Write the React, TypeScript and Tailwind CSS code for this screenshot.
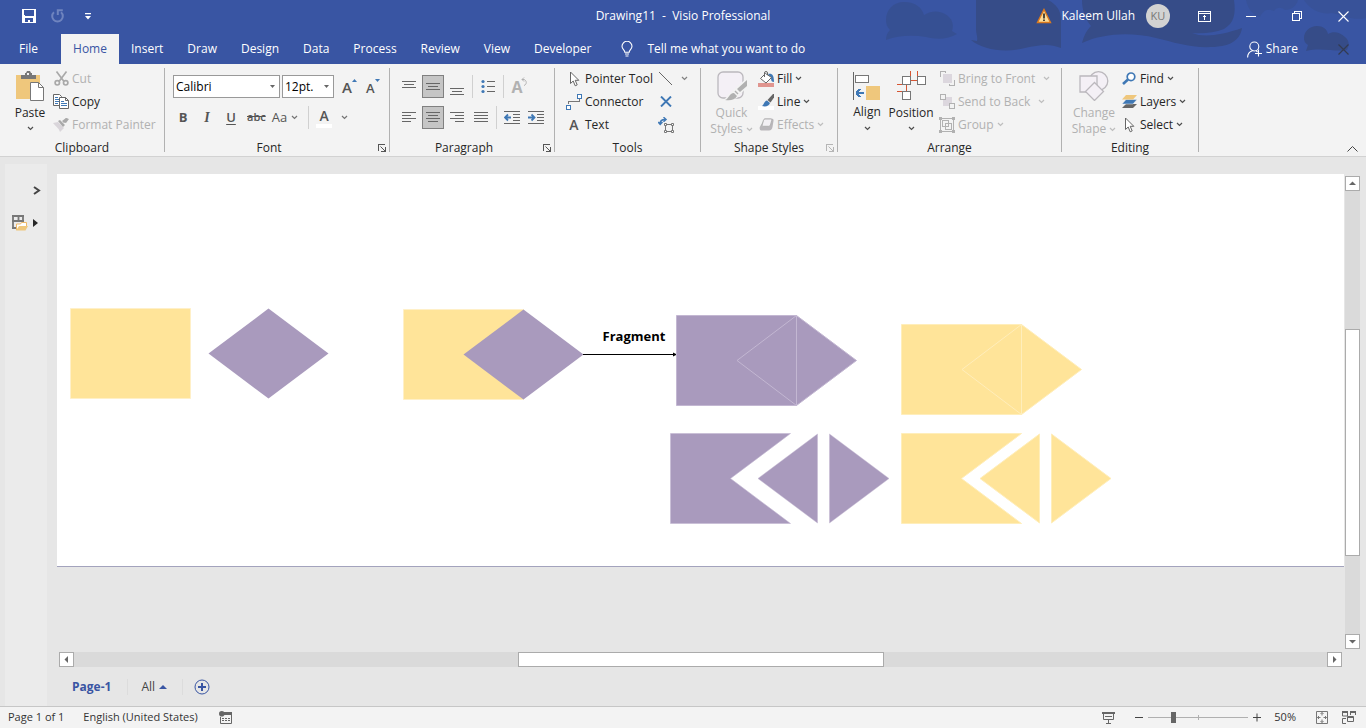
import type { ReactNode } from 'react';

interface ChildrenProps {
  children: ReactNode;
}

const tabs = ['Insert', 'Draw', 'Design', 'Data', 'Process', 'Review', 'View', 'Developer'];

const PURPLE = '#a99abd';
const YELLOW = '#ffe499';

/* ---------- small shared pieces ---------- */

function Chevron() {
  return (
    <svg width="7" height="5" viewBox="0 0 7 5" fill="none" className="shrink-0 opacity-80">
      <path d="M1 1l2.5 2.5L6 1" stroke="currentColor" strokeWidth="1.2" />
    </svg>
  );
}

function Separator() {
  return <div className="my-1 w-px shrink-0 bg-[#b1b1b1]" />;
}

function MiniSeparator() {
  return (
    <div className="flex h-[23px] w-[7px] justify-center">
      <div className="h-full w-px bg-[#d0d0d0]" />
    </div>
  );
}

function Launcher({ label, muted }: { label: string; muted?: boolean }) {
  return (
    <button
      aria-label={label}
      className={`absolute right-[3px] bottom-1 ${muted ? 'text-[#b5b5b5]' : 'text-[#555]'}`}
    >
      <svg width="8" height="8" viewBox="0 0 8 8" fill="none" stroke="currentColor">
        <path d="M.5 7V.5H7" shapeRendering="crispEdges" />
        <path d="M7.5 3v4.5H3" shapeRendering="crispEdges" />
        <path d="M2.5 2.500L7 7" />
      </svg>
    </button>
  );
}

interface GroupProps {
  label: string;
  className: string;
  launcher?: boolean;
  mutedLauncher?: boolean;
  children: ReactNode;
}

function Group({ label, className, launcher, mutedLauncher, children }: GroupProps) {
  return (
    <>
      <section
        aria-label={label}
        className={`relative flex shrink-0 flex-col justify-between pt-[3px] ${className}`}
      >
        <div className="flex h-[69px]">{children}</div>
        <h2 className="text-center leading-4">{label}</h2>
        {launcher && <Launcher label={`${label} settings`} muted={mutedLauncher} />}
      </section>
      <Separator />
    </>
  );
}

interface RowButtonProps {
  icon: ReactNode;
  label: string;
  arrow?: boolean;
  wideArrow?: boolean;
  disabled?: boolean;
}

function RowButton({ icon, label, arrow, wideArrow, disabled }: RowButtonProps) {
  return (
    <button
      disabled={disabled}
      className={`flex h-[23px] items-center whitespace-nowrap ${disabled ? 'text-[#b1b1b1]' : ''}`}
    >
      <span className="mr-[3px] flex w-4 justify-center">{icon}</span>
      {label}
      {arrow && (
        <span className={wideArrow ? 'ml-2' : 'ml-[3px]'}>
          <Chevron />
        </span>
      )}
    </button>
  );
}

interface BigButtonProps {
  icon: ReactNode;
  lines: string[];
  className: string;
  disabled?: boolean;
}

function BigButton({ icon, lines, className, disabled }: BigButtonProps) {
  return (
    <button
      disabled={disabled}
      className={`flex flex-col items-center pt-1 leading-4 ${disabled ? 'text-[#b1b1b1]' : ''} ${className}`}
    >
      <span className="mb-1 flex h-[30px] items-center">{icon}</span>
      <span>{lines[0]}</span>
      <span className="flex h-4 items-center gap-[3px] whitespace-nowrap">
        {lines[1]}
        <Chevron />
      </span>
    </button>
  );
}

function ToolButton({ label, active, children }: ChildrenProps & { label: string; active?: boolean }) {
  return (
    <button
      aria-label={label}
      className={`mx-px flex h-[23px] w-[22px] items-center justify-center ${
        active ? 'border border-[#808080] bg-[#c5c5c5]' : ''
      }`}
    >
      {children}
    </button>
  );
}

/* Text-lines icon, each row is [x, width, y] */
function Lines({ rows }: { rows: [number, number, number][] }) {
  return (
    <svg width="16" height="18" viewBox="0 0 16 18" shapeRendering="crispEdges">
      {rows.map(([x, w, y]) => (
        <rect key={y} x={x} y={y} width={w} height="1" fill="#666" />
      ))}
    </svg>
  );
}

/* ---------- title bar ---------- */

function HeaderArt() {
  return (
    <svg className="absolute top-0 right-0" width="500" height="64" viewBox="866 0 500 64" aria-hidden="true">
      <g fill="#364c88">
        <path d="M886 20c0-10 7-18 18-18 12 0 18 6 20 13 8-5 16-4 21-1 8 4 9 12 7 17l5 3c-8 5-20 6-31 3-13-2-27-2-40 3 0-4 1-7 4-10-3-3-4-6-4-10z" opacity=".6" />
        <path d="M976 0h72c8 4 13 10 13 20v28c-12-5-22-3-36 0-20 5-42 2-54-8l6 1c1-4-1-7-1-12z" />
        <path d="M1082 0h152c2 14 0 23-10 29-10 4-22 5-32 4 12 5 30 2 50-5-1 8-7 16-20 18-26 4-45-3-66-8-25-6-52-5-74 5 2-8 5-13 9-17-6-7-9-16-9-26z" />
        <path d="M1304 38c0-7 6-12 13-12 6 0 10 3 11 8 5-3 12-2 17 3 5 4 4 9 2 13-11 2-27-3-41 1l2-6c-3-2-4-4-4-7z" />
        <path d="M1246 0h52c-2 7-8 10-13 10-4-3-8-3-11 1-7-3-11 0-14 6-7-2-12-8-14-17zM1304 0h62v18c-12 3-24-3-34-5-10 2-22-3-28-13z" opacity=".35" />
      </g>
    </svg>
  );
}

function TitleBar() {
  return (
    <div className="relative grid h-8 grid-cols-3 items-center">
      <div className="flex items-center pl-[22px]">
        <button aria-label="Save" className="mr-[14px]">
          <svg width="14" height="14" viewBox="0 0 14 14" shapeRendering="crispEdges">
            <path fill="#fff" fillRule="evenodd" d="M0 0h14v14H0zM2 1v5l1 1h8l1-1V1zM3 9v4h3v-2h2v2h3V9z" />
          </svg>
        </button>
        <button aria-label="Redo" className="mr-5">
          <svg width="15" height="15" viewBox="0 0 15 15" fill="none" stroke="#6f84bf" strokeWidth="2">
            <path d="M4 3.2A5.3 5.3 0 1 0 11 3.2" />
            <path d="M7.8 6V1.2h5" />
          </svg>
        </button>
        <button aria-label="Customize Quick Access Toolbar">
          <svg width="6" height="7" viewBox="0 0 6 7" fill="#fff">
            <path d="M0 0h6v1.2H0zM0 3h6L3 6.4z" />
          </svg>
        </button>
      </div>
      <h1 className="text-center whitespace-pre">Drawing11  -  Visio Professional</h1>
      <div className="flex items-center justify-end pr-[17px]">
        <svg width="16" height="16" viewBox="0 0 16 16" className="mr-[9px] shrink-0">
          <path d="M8 1.5L14.5 14.5H1.5z" fill="#fbdc9a" stroke="#dc7a1c" strokeWidth="1.4" />
          <path d="M7.2 5.5h1.6v5H7.2zM7.2 11.5h1.6V13H7.2z" fill="#222" />
        </svg>
        <button className="flex items-center gap-[11px] whitespace-nowrap">
          Kaleem Ullah
          <span className="flex size-6 items-center justify-center rounded-full bg-[#d2d2d2] text-[11px] text-[#777]">
            KU
          </span>
        </button>
        <button aria-label="Ribbon Display Options" className="ml-7">
          <svg width="13" height="11" viewBox="0 0 13 11" fill="none" stroke="#fff" shapeRendering="crispEdges">
            <path d="M.5 .5h12v10H.5zM.5 2.5h12" />
            <path d="M6.5 9V4.5M4.5 6.5l2-2 2 2" />
          </svg>
        </button>
        <button aria-label="Minimize" className="ml-[35px]">
          <svg width="10" height="10" viewBox="0 0 10 10">
            <path d="M0 5h10v1H0z" fill="#fff" />
          </svg>
        </button>
        <button aria-label="Restore Down" className="ml-9">
          <svg width="10" height="10" viewBox="0 0 10 10" fill="none" stroke="#fff" shapeRendering="crispEdges">
            <path d="M.5 2.5h7v7h-7zM2.5 2V.5h7v7H8" />
          </svg>
        </button>
        <button aria-label="Close" className="ml-9">
          <svg width="11" height="11" viewBox="0 0 11 11" stroke="#fff" strokeWidth="1.1">
            <path d="M.5 .5l10 10M10.5 .5l-10 10" />
          </svg>
        </button>
      </div>
    </div>
  );
}

function TabBar() {
  return (
    <nav className="relative flex flex-1 items-end pt-0.5">
      <button className="h-[30px] w-[61px] pr-1">File</button>
      <button className="h-[30px] w-[58px] bg-[#f3f3f3] text-[#3955a3]">Home</button>
      {tabs.map((tab) => (
        <button key={tab} className="h-[30px] px-3 first-of-type:ml-0">
          {tab}
        </button>
      ))}
      <button className="flex h-[30px] items-center pl-[18px] whitespace-nowrap">
        <svg width="12" height="16" viewBox="0 0 12 16" fill="none" stroke="#fff" strokeWidth="1.1" className="mr-[14px]">
          <path d="M3.8 11.2C3.8 8.8 1 8.2 1 5.3a5 5 0 0 1 10 0c0 2.900-2.800 3.500-2.800 5.900zM4 13h4M4.500 15h3" />
        </svg>
        Tell me what you want to do
      </button>
      <button className="ml-auto flex h-[30px] items-center gap-1">
        <svg width="15" height="17" viewBox="0 0 15 17" fill="none" stroke="#fff" strokeWidth="1.1">
          <circle cx="7.300" cy="5.500" r="4.500" />
          <path d="M.6 16.500c0-3.500 2-6 5-6.800M9 9.500l1.500 1.500M11.500 8.500v7M8 12.500h7" />
        </svg>
        Share
      </button>
      <button aria-label="Close document" className="mr-[17px] ml-10 flex h-[30px] items-center">
        <svg width="11" height="11" viewBox="0 0 11 11" stroke="#333b52" strokeWidth="1.2">
          <path d="M.5 .5l10 10M10.500 .5l-10 10" />
        </svg>
      </button>
    </nav>
  );
}

/* ---------- ribbon ---------- */

const pasteIcon = (
  <svg width="28" height="30" viewBox="0 0 28 30">
    <path d="M0 4h24v24H0z" fill="#efc77c" />
    <path d="M5 4h4V2h1l1-2h3l1 2h1v2h4v4H5z" fill="#777" />
    <path d="M11 2h2v2h-2z" fill="#f3f3f3" />
    <path d="M14.500 11.500h8l5 5v13h-13z" fill="#fff" stroke="#777" />
    <path d="M22.500 11.500v5h5" fill="none" stroke="#777" />
  </svg>
);

const cutIcon = (
  <svg width="15" height="15" viewBox="0 0 15 15" fill="none" stroke="#a9a9a9" strokeWidth="1.700">
    <path d="M2.500 .5l7.500 10M12.500 .5L5 10.500" />
    <circle cx="3.300" cy="11.800" r="2.200" />
    <circle cx="11.700" cy="11.800" r="2.200" />
  </svg>
);

const copyIcon = (
  <svg width="16" height="15" viewBox="0 0 16 15">
    <path d="M.5 .5h6l2 2v9h-8z" fill="#fff" stroke="#666" />
    <path d="M2 3.500h3M2 5.500h4M2 7.500h4M2 9.500h3" stroke="#3f78b5" />
    <path d="M6.500 3.500h6l3 3v8h-9z" fill="#fff" stroke="#666" />
    <path d="M12.500 3.500v3h3" fill="none" stroke="#666" />
    <path d="M8 7.500h3M8 9.500h6M8 11.500h6" stroke="#3f78b5" />
  </svg>
);

const painterIcon = (
  <svg width="16" height="14" viewBox="0 0 16 14">
    <path d="M0 5l5-1 6 6-4 4C6 10 3 9 0 5z" fill="#d9d5da" />
    <path d="M5 3l2-1 5 5-2 2zM9 3l4-3 2 1-4 4z" fill="#a9a9a9" />
    <path d="M13 0l3 1-3 4-3-1z" fill="#a9a9a9" />
  </svg>
);

const pointerIcon = (
  <svg width="11" height="16" viewBox="0 0 11 16">
    <path d="M1.500 1v11.500l2.700-2.500 2 4.800 2-.9-2-4.600h3.600z" fill="#fff" stroke="#666" />
  </svg>
);

const connectorIcon = (
  <svg width="16" height="16" viewBox="0 0 16 16" fill="none" shapeRendering="crispEdges">
    <path d="M2.500 10V7.500h11V5" stroke="#777" />
    <path d="M11.500 .5h4v4h-4zM.5 11.500h4v4h-4z" fill="#fff" stroke="#3f78b5" />
  </svg>
);

const fillIcon = (
  <svg width="16" height="16" viewBox="0 0 16 16">
    <path d="M0 12h16v4H0z" fill="#e0958f" />
    <path d="M10 3c4-1 6 1 6 8-2 0-3-1-3-4z" fill="#3f78b5" />
    <path d="M2.500 7.500l5-5 6 4-5.500 5.500z" fill="#fff" stroke="#666" />
    <path d="M6.500 6V2a1.500 1.500 0 0 1 3 0v2" fill="none" stroke="#666" />
  </svg>
);

const lineIcon = (
  <svg width="16" height="16" viewBox="0 0 16 16">
    <path d="M0 12h16v4H0z" fill="#fff" />
    <path d="M4 12c2-1 2-5 5-5.500L12 9c-1 3-4 4-8 3z" fill="#3f78b5" />
    <path d="M9.500 6L15 0h1v3.500L12.500 8.500z" fill="#666" />
  </svg>
);

const effectsIcon = (
  <svg width="15" height="13" viewBox="0 0 15 13">
    <path d="M5.500 .5h7c1.500 0 2.300 1 2 2.500l-1 6c-.4 2-1.500 3.500-3.500 3.500H3C1 12.500 .3 11 .8 9z" fill="#b9b6ba" />
    <path d="M6 1h5.500c1 0 1.400.7 1.200 1.500L11.500 7c-.3.900-.8 1.300-1.700 1.300H4.300c-1 0-1.400-.6-1.100-1.400L4.500 2.200C4.800 1.400 5.200 1 6 1z" fill="#f3f0f4" stroke="#b1b1b1" />
  </svg>
);

const quickIcon = (
  <svg width="30" height="30" viewBox="0 0 30 30">
    <rect x="1" y="1" width="25" height="26" rx="5" fill="#f4f0f6" stroke="#bbb8bd" strokeWidth="1.300" />
    <path d="M30 7v9L20 27l-8 3H6l8-9z" fill="#f3f3f3" />
    <path d="M30 9v6l-7 6-3-3zM18.500 19.500l3 3-1 1-3-3zM8 29c4-1 4-7 9-7l3 3c-2 4-7 5-12 4z" fill="#b1b1b1" />
  </svg>
);

const alignIcon = (
  <svg width="28" height="29" viewBox="0 0 28 29" shapeRendering="crispEdges">
    <path d="M0 1h1v28H0z" fill="#666" />
    <path d="M2.500 4.500h13v7h-13z" fill="#fff" stroke="#777" />
    <path d="M13 15h14v14H13z" fill="#efc77c" />
    <path d="M10.500 22H4M7 18l-3.500 4L7 26" fill="none" stroke="#3f78b5" strokeWidth="2" />
  </svg>
);

const positionIcon = (
  <svg width="29" height="30" viewBox="0 0 29 30" fill="none" shapeRendering="crispEdges">
    <path d="M13.500 0v5M20.500 0v5M14 9.500h6M0 13.500h5M0 20.500h5M9.500 14v6" stroke="#d65532" />
    <path d="M5.500 5.500h8v8h-8zM20.500 5.500h8v8h-8zM5.500 20.500h8v8h-8z" fill="#fff" stroke="#777" />
  </svg>
);

const frontIcon = (
  <svg width="15" height="15" viewBox="0 0 15 15" fill="none" stroke="#b1b1b1" shapeRendering="crispEdges">
    <path d="M3 3h9v9H3z" fill="#dcd7de" stroke="none" />
    <path d="M.5 6V.5h5V2M14.500 9v5.500h-5V13" />
  </svg>
);

const backIcon = (
  <svg width="15" height="15" viewBox="0 0 15 15" shapeRendering="crispEdges">
    <path d="M3 3h9v9H3z" fill="#dcd7de" />
    <path d="M.5 .5h5v5h-5zM9.500 9.500h5v5h-5z" fill="#f3f3f3" stroke="#b1b1b1" />
  </svg>
);

const groupIcon = (
  <svg width="16" height="16" viewBox="0 0 16 16" fill="none" stroke="#b1b1b1" shapeRendering="crispEdges">
    <path d="M3.500 3.500h6v6h-6zM6.500 6.500h6v6h-6zM3 1.500h10M3 14.500h10M1.500 3v10M14.500 3v10" strokeWidth="1" />
    <path d="M0 0h3v3H0zM13 0h3v3h-3zM0 13h3v3H0zM13 13h3v3h-3z" fill="#b1b1b1" stroke="none" />
  </svg>
);

const changeShapeIcon = (
  <svg width="30" height="30" viewBox="0 0 30 30" fill="#f4f0f6" stroke="#bbb8bd" strokeWidth="1.300">
    <circle cx="19.500" cy="10" r="9.300" />
    <path d="M1 5h17v16H1z" />
    <path d="M15.500 11.500l9 9-9 9-9-9z" />
  </svg>
);

const findIcon = (
  <svg width="14" height="13" viewBox="0 0 14 13" fill="none" stroke="#3f78b5">
    <circle cx="9" cy="4.800" r="3.800" strokeWidth="1.700" fill="#fff" />
    <path d="M6 7.500L1 12" strokeWidth="2.600" />
  </svg>
);

const layersIcon = (
  <svg width="15" height="13" viewBox="0 0 15 13">
    <path d="M4 9h11l-4 4H0z" fill="#666" />
    <path d="M4 4.500h11l-4 4.500H0z" fill="#3f78b5" stroke="#f3f3f3" strokeWidth=".5" />
    <path d="M4 0h11l-4 4.500H0z" fill="#efc77c" />
  </svg>
);

function BulletsIcon() {
  return (
    <svg width="15" height="15" viewBox="0 0 15 15">
      <path d="M6 2h8v1H6zM6 7h8v1H6zM6 12h8v1H6z" fill="#666" />
      <circle cx="2" cy="2.500" r="1.600" fill="#3f78b5" />
      <circle cx="2" cy="7.500" r="1.600" fill="#3f78b5" />
      <circle cx="2" cy="12.500" r="1.600" fill="#3f78b5" />
    </svg>
  );
}

function IndentIcon({ right }: { right?: boolean }) {
  return (
    <svg width="16" height="13" viewBox="0 0 16 13" className="shrink-0">
      <path d="M0 0h16v1H0zM9 3h7v1H9zM9 6h7v1H9zM9 9h7v1H9zM0 12h16v1H0z" fill="#666" />
      <path
        d={right ? 'M0 6.500h6M3.500 3.500l3 3-3 3' : 'M7 6.500H1M4 3.500l-3 3 3 3'}
        fill="none"
        stroke="#3f78b5"
        strokeWidth="1.800"
      />
    </svg>
  );
}

interface PickerProps {
  label: string;
  value: string;
  className: string;
}

function Picker({ label, value, className }: PickerProps) {
  return (
    <div className={`relative h-[23px] ${className}`}>
      <select
        aria-label={label}
        defaultValue={value}
        className="size-full appearance-none border border-[#999] bg-white pl-[2px] text-black"
      >
        <option>{value}</option>
      </select>
      <svg width="5" height="3" viewBox="0 0 5 3" className="pointer-events-none absolute top-[10px] right-[5px]">
        <path d="M0 0h5L2.500 3z" fill="#666" />
      </svg>
    </div>
  );
}

function FontGroup() {
  return (
    <Group label="Font" className="w-[224px] pr-4" launcher>
      <div className="flex flex-col gap-2 pt-2 pl-2 font-semibold text-[#555]">
        <div className="flex font-normal">
          <Picker label="Font" value="Calibri" className="w-[107px]" />
          <Picker label="Font size" value="12pt." className="ml-[2px] w-[52px]" />
          <button aria-label="Increase font size" className="ml-2 flex w-4 font-semibold">
            <span className="pt-1 text-[15px] leading-4">A</span>
            <svg width="5" height="3" viewBox="0 0 5 3" className="mt-1 shrink-0">
              <path d="M0 3h5L2.500 0z" fill="#3f78b5" />
            </svg>
          </button>
          <button aria-label="Decrease font size" className="ml-2 flex w-4 font-semibold">
            <span className="pt-[5px] text-[13px] leading-4">A</span>
            <svg width="5" height="3" viewBox="0 0 5 3" className="mt-1 shrink-0">
              <path d="M0 0h5L2.500 3z" fill="#3f78b5" />
            </svg>
          </button>
        </div>
        <div className="-ml-0.5 flex text-[13px]">
          <ToolButton label="Bold">
            <span className="font-bold">B</span>
          </ToolButton>
          <ToolButton label="Italic">
            <span className="font-['Liberation_Serif'] text-sm font-bold italic">I</span>
          </ToolButton>
          <ToolButton label="Underline">
            <span className="underline underline-offset-2">U</span>
          </ToolButton>
          <button className="ml-1 text-[11px] line-through">abc</button>
          <button className="ml-1.5 flex items-center gap-1 font-medium" aria-label="Change case">
            Aa <Chevron />
          </button>
          <div className="ml-[7px]">
            <MiniSeparator />
          </div>
          <button className="ml-1 flex items-center gap-[9px]" aria-label="Font color">
            <span className="flex w-4 flex-col items-center border-b-4 border-white text-sm leading-4">A</span>
            <Chevron />
          </button>
        </div>
      </div>
    </Group>
  );
}

function ParagraphGroup() {
  return (
    <Group label="Paragraph" className="w-[164px] pr-4" launcher>
      <div className="flex flex-col gap-2 pt-2 pl-[7px]">
        <div className="flex">
          <ToolButton label="Align top">
            <Lines rows={[[1, 14, 3], [3, 10, 6], [1, 14, 9]]} />
          </ToolButton>
          <ToolButton label="Align middle" active>
            <Lines rows={[[1, 14, 5], [3, 10, 8], [1, 14, 11]]} />
          </ToolButton>
          <ToolButton label="Align bottom">
            <Lines rows={[[1, 14, 10], [3, 10, 13], [1, 14, 16]]} />
          </ToolButton>
          <MiniSeparator />
          <ToolButton label="Bullets">
            <BulletsIcon />
          </ToolButton>
          <MiniSeparator />
          <ToolButton label="Rotate text">
            <span className="text-base font-bold text-[#b1b1b1]">A</span>
            <svg width="6" height="9" viewBox="0 0 6 9" fill="none" stroke="#b1b1b1" className="mt-0.5 -ml-0.5 shrink-0 self-start">
              <path d="M3 8.500c3-1 3-5 0-6H1M3 .5l-2 2 2 2" />
            </svg>
          </ToolButton>
        </div>
        <div className="flex">
          <ToolButton label="Align left">
            <Lines rows={[[1, 14, 3], [1, 9, 6], [1, 14, 9], [1, 9, 12]]} />
          </ToolButton>
          <ToolButton label="Center" active>
            <Lines rows={[[1, 14, 3], [3, 10, 6], [1, 14, 9], [3, 10, 12]]} />
          </ToolButton>
          <ToolButton label="Align right">
            <Lines rows={[[1, 14, 3], [6, 9, 6], [1, 14, 9], [6, 9, 12]]} />
          </ToolButton>
          <ToolButton label="Justify">
            <Lines rows={[[1, 14, 3], [1, 14, 6], [1, 14, 9], [1, 14, 12]]} />
          </ToolButton>
          <MiniSeparator />
          <ToolButton label="Decrease indent">
            <IndentIcon />
          </ToolButton>
          <ToolButton label="Increase indent">
            <IndentIcon right />
          </ToolButton>
        </div>
      </div>
    </Group>
  );
}

function Ribbon() {
  return (
    <div className="flex h-[93px] shrink-0 border-b border-[#d2d2d2] bg-[#f3f3f3] text-[#262626]">
      <Group label="Clipboard" className="w-[164px]">
        <BigButton icon={pasteIcon} lines={['Paste']} className="ml-2 w-11" />
        <div className="ml-px flex flex-col">
          <RowButton icon={cutIcon} label="Cut" disabled />
          <RowButton icon={copyIcon} label="Copy" />
          <RowButton icon={painterIcon} label="Format Painter" disabled />
        </div>
      </Group>

      <FontGroup />
      <ParagraphGroup />

      <Group label="Tools" className="w-[145px]">
        <div className="ml-[11px] flex w-[92px] flex-col">
          <RowButton icon={pointerIcon} label="Pointer Tool" />
          <RowButton icon={connectorIcon} label="Connector" />
          <RowButton icon={<span className="text-sm font-semibold text-[#555]">A</span>} label="Text" />
        </div>
        <div className="flex flex-col text-[#666]">
          <button aria-label="Line" className="flex h-[23px] items-center gap-2">
            <svg width="15" height="15" viewBox="0 0 15 15" stroke="currentColor">
              <path d="M1 1l13 13" />
            </svg>
            <Chevron />
          </button>
          <button aria-label="Connection point" className="flex h-[23px] items-center pl-0.5">
            <svg width="12" height="11" viewBox="0 0 12 11" stroke="#3f78b5" strokeWidth="1.900">
              <path d="M1 .5l10 10M11 .5l-10 10" />
            </svg>
          </button>
          <button aria-label="Text block" className="flex h-[23px] items-center">
            <svg width="17" height="16" viewBox="0 0 17 16" fill="none">
              <path d="M2 7c0-3 1-4.500 5-4.500M.2 5l2 2.300L4.500 5M5.500 .2L8 2.500 5.500 4.800" stroke="#3f78b5" strokeWidth="1.500" />
              <path d="M7.500 7.500h7v7h-7z" stroke="#777" />
              <path d="M6.500 6.500h2v2h-2zM13.500 6.500h2v2h-2zM6.500 13.500h2v2h-2zM13.500 13.500h2v2h-2z" fill="#fff" stroke="#777" />
            </svg>
          </button>
        </div>
      </Group>

      <Group label="Shape Styles" className="w-[136px]" launcher mutedLauncher>
        <BigButton icon={quickIcon} lines={['Quick', 'Styles']} className="ml-1 w-[53px]" disabled />
        <div className="flex flex-col">
          <RowButton icon={fillIcon} label="Fill" arrow />
          <RowButton icon={lineIcon} label="Line" arrow />
          <RowButton icon={effectsIcon} label="Effects" arrow disabled />
        </div>
      </Group>

      <Group label="Arrange" className="w-[223px]">
        <BigButton icon={alignIcon} lines={['Align']} className="ml-[7px] w-11" />
        <BigButton icon={positionIcon} lines={['Position']} className="mr-1.5 w-11" />
        <div className="flex flex-col">
          <RowButton icon={frontIcon} label="Bring to Front" arrow wideArrow disabled />
          <RowButton icon={backIcon} label="Send to Back" arrow wideArrow disabled />
          <RowButton icon={groupIcon} label="Group" arrow disabled />
        </div>
      </Group>

      <Group label="Editing" className="w-[136px]">
        <BigButton icon={changeShapeIcon} lines={['Change', 'Shape']} className="ml-[5px] w-[54px]" disabled />
        <div className="flex flex-col">
          <RowButton icon={findIcon} label="Find" arrow />
          <RowButton icon={layersIcon} label="Layers" arrow />
          <RowButton icon={pointerIcon} label="Select" arrow />
        </div>
      </Group>

      <button aria-label="Collapse the Ribbon" className="mt-auto mr-2 mb-1 ml-auto">
        <svg width="11" height="6" viewBox="0 0 11 6" fill="none" stroke="#444">
          <path d="M.5 5.500l5-5 5 5" />
        </svg>
      </button>
    </div>
  );
}

/* ---------- drawing page ---------- */

function Drawing() {
  return (
    <svg width="1287" height="392" viewBox="0 0 1287 392" className="block max-w-none">
      <g strokeWidth="1">
        <path d="M13.500 134.500h120v90h-120z" fill={YELLOW} stroke="#fff0c8" />
        <path d="M151.500 179.500l60-45 60 45-60 45z" fill={PURPLE} />

        <path d="M346.500 135.500h120v90h-120z" fill={YELLOW} stroke="#fff0c8" />
        <path d="M406.500 180.500l60-45 60 45-60 45z" fill={PURPLE} />

        <path d="M526 180.500h91" stroke="#000" />
        <path d="M616 178.500l4 2-4 2z" fill="#000" />

        <g fill={PURPLE} stroke="#c3b7d2">
          <path d="M619.500 141.500h120l60 45-60 45h-120z" />
          <path d="M739.500 141.500v90l-59.500-45z" />
          <path d="M733.500 259.500h-120v90h120l-60-45z" strokeOpacity=".6" />
          <path d="M760.500 260v89l-59.500-44.500zM772.500 260v89l59.500-44.500z" strokeOpacity=".5" />
        </g>

        <g fill={YELLOW} stroke="#ffeebb">
          <path d="M844.500 150.500h120l60 45-60 45h-120z" />
          <path d="M964.500 150.500v90l-59.500-45z" />
          <path d="M964.500 259.500h-120v90h120l-60-45z" />
          <path d="M982.500 260v89l-59.500-44.500zM994.500 260v89l59.500-44.500z" />
        </g>
      </g>
      <text x="577" y="167" textAnchor="middle" className="fill-black font-['Open_Sans'] text-[13px] font-bold">
        Fragment
      </text>
    </svg>
  );
}

function ArrowButton({ label, d }: { label: string; d: string }) {
  return (
    <button
      aria-label={label}
      className="flex size-[15px] shrink-0 items-center justify-center border border-[#ababab] bg-white"
    >
      <svg width="7" height="7" viewBox="0 0 7 7" fill="#666">
        <path d={d} />
      </svg>
    </button>
  );
}

function Workspace() {
  return (
    <main className="flex min-h-0 flex-1 bg-[#e6e6e6]">
      <aside className="mt-[7px] ml-[5px] flex w-[42px] shrink-0 flex-col items-end bg-[#ebebeb] pt-[22px] pr-[6px]">
        <button aria-label="Expand the Shapes window">
          <svg width="8" height="9" viewBox="0 0 8 9" fill="none" stroke="#444" strokeWidth="2">
            <path d="M1 1l5 3.500L1 8" />
          </svg>
        </button>
        <button aria-label="More shapes" className="mt-5 mr-[3px] flex items-center gap-[5px]">
          <svg width="16" height="16" viewBox="0 0 16 16" fill="none">
            <path d="M0 1h12M1 0v14M0 13h4M0 6h6M6.500 2v4M6 6h6M11 0v6" stroke="#777" strokeWidth="1.800" />
            <path d="M4.500 15V9h4l1-1.500h5V11" fill="#fff" stroke="#efb969" />
            <path d="M4 15.500L7 11h9l-2.500 4.500z" fill="#efc77c" />
          </svg>
          <svg width="5" height="8" viewBox="0 0 5 8" fill="#262626">
            <path d="M0 0l5 4-5 4z" />
          </svg>
        </button>
      </aside>

      <div className="ml-[10px] flex min-w-0 flex-1 flex-col pt-[17px] pr-[6px]">
        <div className="flex min-h-0 flex-1">
          <div className="min-w-0 flex-1">
            <div className="overflow-hidden border-b border-[#a3a3bd] bg-white">
              <Drawing />
            </div>
          </div>
          <div className="mt-0.5 ml-px flex flex-col bg-[#dadada]">
            <ArrowButton label="Scroll up" d="M0 5h7L3.500 1.500z" />
            <div className="flex-[139]" />
            <div className="flex-[227] border border-[#ababab] bg-white" />
            <div className="flex-[79]" />
            <ArrowButton label="Scroll down" d="M0 2h7L3.500 5.500z" />
          </div>
        </div>

        <div className="mt-[3px] mr-[18px] ml-0.5 flex bg-[#dadada]">
          <ArrowButton label="Scroll left" d="M5 0v7L1.500 3.500z" />
          <div className="flex-[445]" />
          <div className="flex-[365] border border-[#ababab] bg-white" />
          <div className="flex-[444]" />
          <ArrowButton label="Scroll right" d="M2 0v7l3.500-3.500z" />
        </div>

        <div className="flex h-[39px] items-center text-[#444]">
          <button className="pr-4 pl-[15px] font-bold text-[#3955a3]">Page-1</button>
          <div className="h-4 w-px bg-[#dcdcdc]" />
          <button className="flex items-center gap-1 px-[13px]">
            All
            <svg width="8" height="4" viewBox="0 0 8 4" fill="#3955a3">
              <path d="M0 4h8L4 0z" />
            </svg>
          </button>
          <div className="ml-0.5 h-4 w-px bg-[#dcdcdc]" />
          <button aria-label="Insert page" className="ml-[11px]">
            <svg width="16" height="16" viewBox="0 0 16 16" fill="none" stroke="#3955a3">
              <circle cx="8" cy="8" r="7" />
              <path d="M8 4v8M4 8h8" strokeWidth="2" />
            </svg>
          </button>
        </div>
      </div>
    </main>
  );
}

function StatusBar() {
  return (
    <footer className="flex h-[22px] shrink-0 items-center border-t border-[#c6c6c6] bg-[#f3f3f3] pl-2 text-[11px] text-[#333]">
      <span>Page 1 of 1</span>
      <span className="ml-[19px]">English (United States)</span>
      <button aria-label="Record macro" className="ml-[21px]">
        <svg width="13" height="13" viewBox="0 0 13 13">
          <path d="M5 1h8v3H5z" fill="#666" />
          <path d="M1.500 6v6.500h11V4" fill="none" stroke="#666" />
          <path d="M3 7h2v1H3zM6 7h2v1H6zM9 7h2v1H9zM3 9h2v1H3zM6 9h2v1H6zM9 9h2v1H9z" fill="#666" />
          <circle cx="2.800" cy="2.800" r="2.800" fill="#666" />
        </svg>
      </button>

      <div className="ml-auto flex items-center">
        <button aria-label="Presentation mode">
          <svg width="13" height="12" viewBox="0 0 13 12" fill="none" stroke="#666">
            <path d="M0 1h13" strokeWidth="2" />
            <path d="M1.500 2v5.500h10V2M3 4.500h7M6.500 8v3M4 11.500h5" />
          </svg>
        </button>
        <button aria-label="Zoom out" className="ml-5">
          <svg width="8" height="9" viewBox="0 0 8 9">
            <path d="M0 4h8v1H0z" fill="#444" />
          </svg>
        </button>
        <div className="relative mx-[5px] flex h-3 w-[100px] items-center">
          <div className="absolute left-1/2 h-[5px] w-px bg-[#b0b0b0]" />
          <input
            type="range"
            aria-label="Zoom"
            min={0}
            max={100}
            defaultValue={24}
            className="relative h-px w-full appearance-none bg-[#b0b0b0] [&::-webkit-slider-thumb]:h-[11px] [&::-webkit-slider-thumb]:w-[5px] [&::-webkit-slider-thumb]:appearance-none [&::-webkit-slider-thumb]:bg-[#666]"
          />
        </div>
        <button aria-label="Zoom in">
          <svg width="8" height="9" viewBox="0 0 8 9">
            <path d="M0 4h8v1H0zM3.500 .5h1v8h-1z" fill="#444" />
          </svg>
        </button>
        <button className="ml-[13px]">50%</button>
        <button aria-label="Fit page to window" className="ml-5">
          <svg width="12" height="13" viewBox="0 0 12 13" fill="none" stroke="#777">
            <path d="M.5 .5h11v12H.5z" />
            <path d="M6 1.500v3M4.500 3L6 1.500 7.500 3M6 11.500v-3M4.500 10L6 11.500 7.500 10M1.500 6.500h3M10.500 6.500h-3M3 5L1.500 6.500 3 8M9 5l1.500 1.500L9 8" />
          </svg>
        </button>
        <button aria-label="Switch windows" className="mr-[10px] ml-[14px]">
          <svg width="14" height="13" viewBox="0 0 14 13" fill="none" stroke="#666">
            <path d="M.5 5V.5h5V5H.5M8.500 4V.5h5V4M4 12.500H.5v-5H4" />
            <path d="M0 1h6M8 1h6" strokeWidth="2" />
            <path d="M5.500 5.500h6v5h-6zM5.500 6.500h6" />
          </svg>
        </button>
      </div>
    </footer>
  );
}

export default function App() {
  return (
    <div className="flex min-h-screen flex-col overflow-hidden bg-[#e6e6e6] font-['Open_Sans','Noto_Sans',sans-serif] text-xs">
      <header className="relative flex h-16 shrink-0 flex-col bg-[#3955a3] text-white">
        <HeaderArt />
        <TitleBar />
        <TabBar />
      </header>
      <Ribbon />
      <Workspace />
      <StatusBar />
    </div>
  );
}
